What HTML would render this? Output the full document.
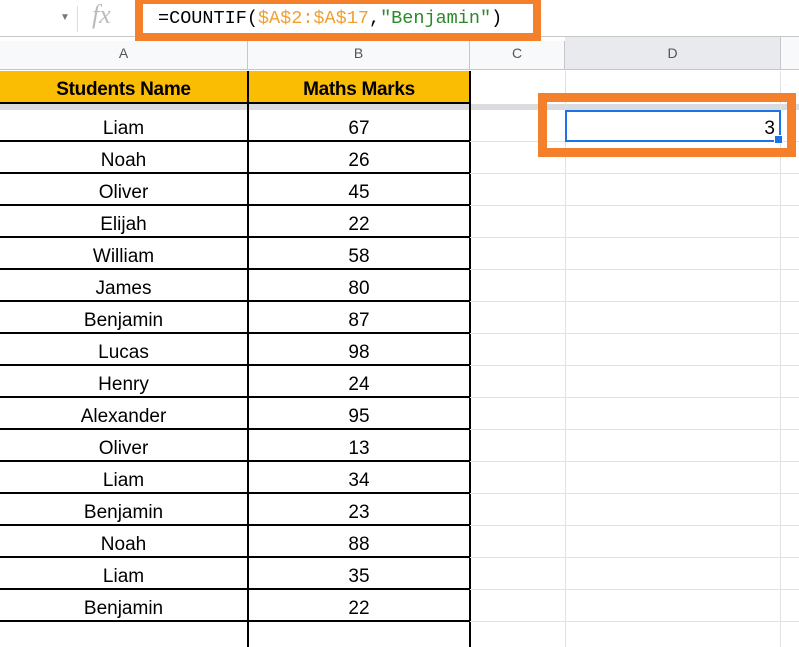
<!DOCTYPE html>
<html><head><style>
*{margin:0;padding:0;box-sizing:border-box}
body{width:799px;height:647px;overflow:hidden;background:#fff;font-family:"Liberation Sans",Arial,sans-serif;position:relative}
.a{position:absolute}
.hdr{top:37px;height:33px;background:#f8f9fa;border-right:1px solid #c7c7c7;border-bottom:1px solid #c7c7c7;color:#555;font-size:14px;text-align:center;line-height:33px}
.r{position:absolute;left:0;width:470px;height:32px;font-size:19px;color:#000}
.r div{position:absolute;top:0;height:32px;line-height:37px;text-align:center}
.c1{left:0;width:247px}
.c2{left:249px;width:220px}
.hl{position:absolute;left:0;width:470px;height:2px;background:#000}
.gl{position:absolute;left:470px;width:329px;height:1px;background:#e2e2e2}
</style></head><body>
<div class="a" style="left:0;top:0;width:799px;height:37px;background:#fff;border-bottom:1px solid #c7c7c7"></div>
<div class="a" style="left:60px;top:12px;color:#777;font-size:10px">▼</div>
<div class="a" style="left:77px;top:6px;width:1px;height:26px;background:#ddd"></div>
<div class="a" style="left:92px;top:0px;color:#bbb;font-family:'Liberation Serif',serif;font-style:italic;font-size:26px">fx</div>
<div class="a" style="left:135px;top:-4px;width:406px;height:45px;border:8px solid #f5802b;background:#fff"></div>
<div class="a" style="left:158px;top:8px;font-family:'Liberation Mono',monospace;font-size:18.5px;color:#000;white-space:pre">=COUNTIF(<span style="color:#f0a030">$A$2:$A$17</span>,<span style="color:#2a8a2a">"Benjamin"</span>)</div>
<div class="a hdr" style="left:0;width:248px;top:41px;height:29px;line-height:25px">A</div>
<div class="a hdr" style="left:248px;width:222px;top:41px;height:29px;line-height:25px">B</div>
<div class="a hdr" style="left:470px;width:95px;top:41px;height:29px;line-height:25px">C</div>
<div class="a hdr" style="left:565px;width:216px;top:37px;line-height:33px;background:#e8eaed">D</div>
<div class="a hdr" style="left:781px;width:18px;top:37px;border-right:none"></div>
<!-- row1 -->
<div class="a" style="left:0;top:71px;width:470px;height:33px;background:#fbbc04"></div>
<div class="a" style="left:0;top:71px;width:247px;height:33px;text-align:center;line-height:37px;font-weight:bold;font-size:19px;letter-spacing:-0.3px">Students Name</div>
<div class="a" style="left:249px;top:71px;width:220px;height:33px;text-align:center;line-height:37px;font-weight:bold;font-size:19px;letter-spacing:-0.3px">Maths Marks</div>
<div class="hl" style="top:102px"></div>
<div class="a" style="left:0;top:104px;width:799px;height:6px;background:#dadce0"></div>
<div class="a" style="left:565px;top:71px;width:1px;height:576px;background:#e2e2e2"></div>
<div class="a" style="left:780px;top:71px;width:1px;height:576px;background:#e2e2e2"></div>
<div class="a" style="left:247px;top:71px;width:2px;height:576px;background:#000"></div>
<div class="a" style="left:469px;top:71px;width:2px;height:576px;background:#000"></div>
<div class="r" style="top:110px"><div class="c1">Liam</div><div class="c2">67</div></div>
<div class="r" style="top:142px"><div class="c1">Noah</div><div class="c2">26</div></div>
<div class="r" style="top:174px"><div class="c1">Oliver</div><div class="c2">45</div></div>
<div class="r" style="top:206px"><div class="c1">Elijah</div><div class="c2">22</div></div>
<div class="r" style="top:238px"><div class="c1">William</div><div class="c2">58</div></div>
<div class="r" style="top:270px"><div class="c1">James</div><div class="c2">80</div></div>
<div class="r" style="top:302px"><div class="c1">Benjamin</div><div class="c2">87</div></div>
<div class="r" style="top:334px"><div class="c1">Lucas</div><div class="c2">98</div></div>
<div class="r" style="top:366px"><div class="c1">Henry</div><div class="c2">24</div></div>
<div class="r" style="top:398px"><div class="c1">Alexander</div><div class="c2">95</div></div>
<div class="r" style="top:430px"><div class="c1">Oliver</div><div class="c2">13</div></div>
<div class="r" style="top:462px"><div class="c1">Liam</div><div class="c2">34</div></div>
<div class="r" style="top:494px"><div class="c1">Benjamin</div><div class="c2">23</div></div>
<div class="r" style="top:526px"><div class="c1">Noah</div><div class="c2">88</div></div>
<div class="r" style="top:558px"><div class="c1">Liam</div><div class="c2">35</div></div>
<div class="r" style="top:590px"><div class="c1">Benjamin</div><div class="c2">22</div></div>
<div class="hl" style="top:140px"></div><div class="hl" style="top:172px"></div><div class="hl" style="top:204px"></div><div class="hl" style="top:236px"></div>
<div class="hl" style="top:268px"></div><div class="hl" style="top:300px"></div><div class="hl" style="top:332px"></div><div class="hl" style="top:364px"></div>
<div class="hl" style="top:396px"></div><div class="hl" style="top:428px"></div><div class="hl" style="top:460px"></div><div class="hl" style="top:492px"></div>
<div class="hl" style="top:524px"></div><div class="hl" style="top:556px"></div><div class="hl" style="top:588px"></div><div class="hl" style="top:620px"></div>
<div class="gl" style="top:141px"></div><div class="gl" style="top:173px"></div><div class="gl" style="top:205px"></div><div class="gl" style="top:237px"></div>
<div class="gl" style="top:269px"></div><div class="gl" style="top:301px"></div><div class="gl" style="top:333px"></div><div class="gl" style="top:365px"></div>
<div class="gl" style="top:397px"></div><div class="gl" style="top:429px"></div><div class="gl" style="top:461px"></div><div class="gl" style="top:493px"></div>
<div class="gl" style="top:525px"></div><div class="gl" style="top:557px"></div><div class="gl" style="top:589px"></div><div class="gl" style="top:621px"></div>
<!-- selection -->
<div class="a" style="left:538px;top:93px;width:258px;height:64px;border:9px solid #f5802b"></div>
<div class="a" style="left:565px;top:110px;width:216px;height:32px;border:2px solid #1a73e8;background:#fff;text-align:right;font-size:19px;line-height:33px;padding-right:4px">3</div>
<div class="a" style="left:774px;top:135px;width:9px;height:9px;background:#1a73e8;border:1px solid #fff"></div>
</body></html>
